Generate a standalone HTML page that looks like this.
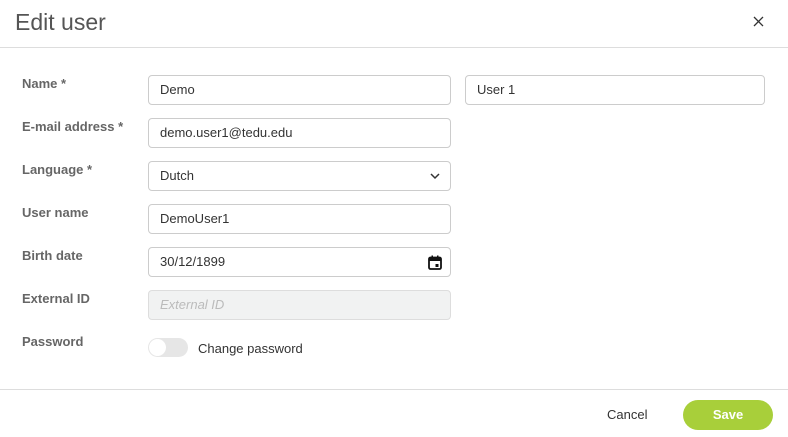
<!DOCTYPE html><html><head><style>
body{margin:0;width:788px;height:437px;background:#fff;font-family:"Liberation Sans",sans-serif;position:relative;overflow:hidden}
.a{position:absolute}
h1{position:absolute;left:15px;top:9px;margin:0;font-weight:300;font-size:23px;color:#555}
.hl{position:absolute;left:0;width:788px;height:1px;background:#ddd}
.lb{position:absolute;left:22px;font-size:13px;font-weight:bold;color:#666}
.in{position:absolute;left:148px;width:301px;height:28px;border:1px solid #ccc;border-radius:4px;font-size:13px;color:#333;line-height:28px;padding-left:11px;box-sizing:content-box}
</style></head><body>
<h1>Edit user</h1>
<svg class="a" style="left:753px;top:16px" width="11" height="11" viewBox="0 0 11 11"><path d="M1 1L10 10M10 1L1 10" stroke="#333" stroke-width="1.3"/></svg>
<div class="hl" style="top:47px"></div>
<div class="lb" style="top:76px">Name *</div>
<div class="in" style="top:75px;width:290px">Demo</div>
<div class="in" style="top:75px;left:465px;width:287px">User 1</div>
<div class="lb" style="top:119px">E-mail address *</div>
<div class="in" style="top:118px;width:290px">demo.user1@tedu.edu</div>
<div class="lb" style="top:162px">Language *</div>
<div class="in" style="top:161px;width:290px">Dutch</div>
<svg class="a" style="left:430px;top:172px" width="10" height="8" viewBox="0 0 10 8"><path d="M1 2L5 6L9 2" stroke="#333" stroke-width="1.5" fill="none"/></svg>
<div class="lb" style="top:205px">User name</div>
<div class="in" style="top:204px;width:290px">DemoUser1</div>
<div class="lb" style="top:248px">Birth date</div>
<div class="in" style="top:247px;width:290px">30/12/1899</div>
<svg class="a" style="left:428px;top:255px" width="14" height="15" viewBox="0 0 14 15"><rect x="1" y="2.5" width="12" height="11.5" rx="1.5" fill="none" stroke="#111" stroke-width="1.8"/><rect x="1" y="2.5" width="12" height="3.5" fill="#111"/><rect x="3.5" y="0.5" width="1.5" height="3" fill="#111"/><rect x="9" y="0.5" width="1.5" height="3" fill="#111"/><rect x="7.5" y="9" width="3" height="3" fill="#111"/></svg>
<div class="lb" style="top:291px">External ID</div>
<div class="in" style="top:290px;width:290px;background:#f1f2f2;border-color:#ddd;color:#bbb;font-style:italic">External ID</div>
<div class="lb" style="top:334px">Password</div>
<div class="a" style="left:148px;top:338px;width:40px;height:19px;border-radius:10px;background:#e6e6e6"></div>
<div class="a" style="left:149px;top:339px;width:17px;height:17px;border-radius:50%;background:#fff"></div>
<div class="a" style="left:198px;top:341px;font-size:13px;color:#333">Change password</div>
<div class="hl" style="top:389px"></div>
<div class="a" style="left:607px;top:407px;font-size:13px;color:#333">Cancel</div>
<div class="a" style="left:683px;top:400px;width:90px;height:30px;border-radius:15px;background:#a8cf3a;color:#fff;font-weight:bold;font-size:13px;text-align:center;line-height:30px">Save</div>
</body></html>
